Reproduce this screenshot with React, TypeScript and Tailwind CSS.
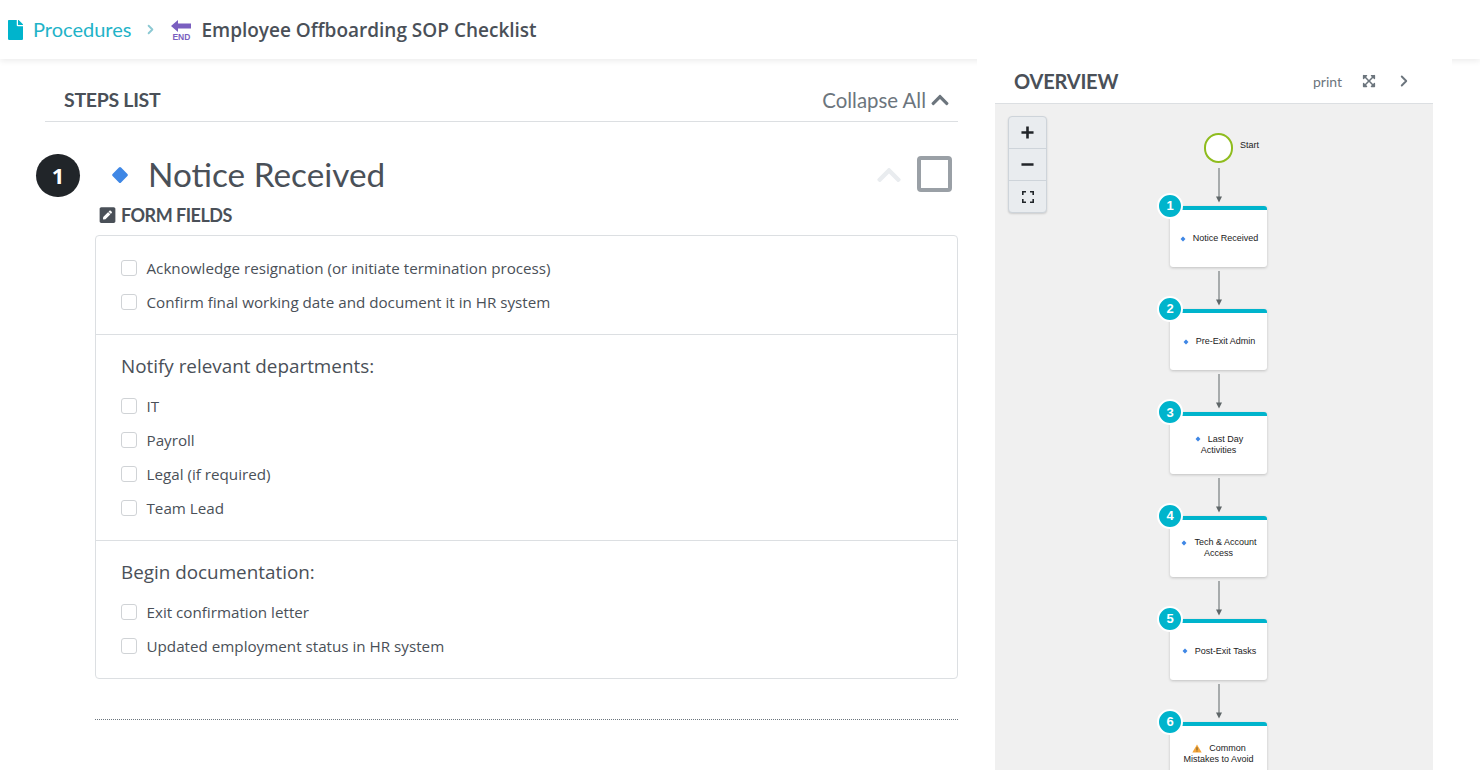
import { FaChevronUp, FaExpandArrowsAlt, FaFile, FaPenSquare } from "react-icons/fa";
import { ChevronRight } from "lucide-react";

const flowNodes = [
  { num: 1, lines: ["Notice Received"] },
  { num: 2, lines: ["Pre-Exit Admin"] },
  { num: 3, lines: ["Last Day", "Activities"] },
  { num: 4, lines: ["Tech & Account", "Access"] },
  { num: 5, lines: ["Post-Exit Tasks"] },
  { num: 6, lines: ["Common", "Mistakes to Avoid"], warn: true },
];

function Diamond({ className }: { className: string }) {
  return (
    <svg viewBox="0 0 20 20" className={className} aria-hidden="true">
      <rect x="4" y="4" width="12" height="12" rx="1.5" transform="rotate(45 10 10)" fill="#3f87e5" />
    </svg>
  );
}

function Arrow() {
  return (
    <svg width="8" height="35" viewBox="0 0 8 35" className="shrink-0" aria-hidden="true">
      <path d="M4 0V29" stroke="#5f6668" strokeWidth="1" />
      <path d="M1 28.5H7L4 34.5Z" fill="#5f6668" />
    </svg>
  );
}

function FlowNode({ num, lines, warn }: { num: number; lines: string[]; warn?: boolean }) {
  return (
    <div className="relative h-[61.2px] w-[97px] shrink-0 rounded-[3px] border-t-[4px] border-[#00b4cc] bg-white shadow-[0_1px_3px_rgba(0,0,0,0.2)]">
      <span className="absolute -left-[13px] -top-[17px] flex h-[26px] w-[26px] items-center justify-center rounded-full border-2 border-white bg-[#00b4cc] font-['Liberation_Sans',sans-serif] text-[13px] font-bold text-white">
        {num}
      </span>
      <div className="flex h-[57px] flex-col items-center justify-center text-center font-['Liberation_Sans',sans-serif] text-[9px] leading-[11px] text-[#222]">
        <span className="flex items-center gap-[7px] pl-[1px]">
          {warn ? (
            <svg viewBox="0 0 16 14" className="h-[9px] w-[10px]" aria-hidden="true">
              <path d="M8 0.5L15.5 13.5H0.5Z" fill="#f4a63a" />
              <path d="M7.3 5h1.4v4.6H7.3zM7.3 10.4h1.4v1.4H7.3z" fill="#5a4a2a" />
            </svg>
          ) : (
            <Diamond className="h-[6px] w-[6px]" />
          )}
          {lines[0]}
        </span>
        {lines[1] ? <span>{lines[1]}</span> : null}
      </div>
    </div>
  );
}

function CheckRow({ label }: { label: string }) {
  return (
    <label className="flex h-[34px] items-center gap-[9.5px]">
      <span className="h-[16px] w-[16px] shrink-0 rounded-[3px] border border-[#d0d3d6] bg-white" />
      <span className="text-[15.2px] text-[#4a5058]">{label}</span>
    </label>
  );
}

export default function App() {
  return (
    <div className="h-[770px] w-[1480px] overflow-hidden bg-white font-['Open_Sans',sans-serif]">
      <header className="flex h-[59px] items-center bg-white pl-[8px] shadow-[0_2px_6px_rgba(0,0,0,0.08)]">
        <FaFile className="h-[20px] w-[15px] text-[#00b4cc]" />
        <span className="ml-[10px] -translate-y-[1px] font-['Lato',sans-serif] text-[20px] text-[#1fb3c8]">Procedures</span>
        <ChevronRight className="ml-[12px] h-[15px] w-[15px] text-[#8cc9d3]" strokeWidth={3} />
        <span className="ml-[13px] flex w-[20px] translate-y-[1px] flex-col items-center">
          <svg viewBox="0 0 20 12" className="h-[12px] w-[20px]" aria-hidden="true">
            <path d="M0 6L7 0V3.5H20V8.5H7V12Z" fill="#7a5fc0" />
          </svg>
          <span className="font-['Liberation_Sans',sans-serif] text-[8.5px] font-bold leading-[10px] text-[#7a5fc0]">END</span>
        </span>
        <h1 className="ml-[10px] translate-y-[1px] text-[19px] font-semibold text-[#4a5058]">Employee Offboarding SOP Checklist</h1>
      </header>

      <div className="flex">
        <main className="w-[977px] shrink-0 pt-[17px]">
          <div className="ml-[45px] mr-[19px] flex h-[46px] items-center justify-between border-b border-[#dcdfe2] pl-[19px] pr-[9px] font-['Lato',sans-serif]">
            <h2 className="translate-y-[1px] text-[19.5px] font-bold tracking-[-0.3px] text-[#4a5058]">STEPS LIST</h2>
            <button type="button" className="flex translate-y-[2px] items-center gap-[5px] text-[20.4px] text-[#6c757d]">
              Collapse All
              <FaChevronUp className="h-[20px] w-[18px] text-[#6c757d]" />
            </button>
          </div>

          <div className="ml-[36px] mr-[19px] flex items-start pt-[32px]">
            <span className="flex h-[43px] w-[44px] shrink-0 items-center justify-center rounded-full bg-[#212529] text-[22px] font-bold text-white">
              1
            </span>
            <div className="ml-[15px] flex-1">
              <div className="flex h-[42px] items-center">
                <Diamond className="ml-[15px] h-[20px] w-[20px]" />
                <h3 className="ml-[18px] flex-1 font-['Lato',sans-serif] text-[33.3px] text-[#4a5058]">Notice Received</h3>
                <FaChevronUp className="mr-[16px] h-[28px] w-[24px] text-[#e9ecef]" />
                <span className="mr-[6px] h-[36px] w-[35px] -translate-y-[1px] rounded-[4px] border-[4px] border-[#9aa0a6]" />
              </div>
              <div className="mt-[8px] flex h-[22px] items-center pl-[4px] font-['Lato',sans-serif]">
                <FaPenSquare className="h-[18px] w-[17px] text-[#4a5058]" />
                <span className="ml-[5px] text-[18px] font-bold tracking-[-0.5px] text-[#4a5058]">FORM FIELDS</span>
              </div>
              <div className="mt-[9px] rounded-[4px] border border-[#dcdfe2]">
                <section className="h-[99px] border-b border-[#dcdfe2] px-[25px] pt-[15px]">
                  <CheckRow label="Acknowledge resignation (or initiate termination process)" />
                  <CheckRow label="Confirm final working date and document it in HR system" />
                </section>
                <section className="h-[206px] border-b border-[#dcdfe2] px-[25px] pt-[16px]">
                  <h4 className="mb-[8px] text-[18.85px] leading-[30px] text-[#4a5058]">Notify relevant departments:</h4>
                  <CheckRow label="IT" />
                  <CheckRow label="Payroll" />
                  <CheckRow label="Legal (if required)" />
                  <CheckRow label="Team Lead" />
                </section>
                <section className="h-[137px] px-[25px] pt-[16px]">
                  <h4 className="mb-[8px] text-[18.85px] leading-[30px] text-[#4a5058]">Begin documentation:</h4>
                  <CheckRow label="Exit confirmation letter" />
                  <CheckRow label="Updated employment status in HR system" />
                </section>
              </div>
              <div className="mt-[40px] border-t border-dotted border-[#6c757d]" />
            </div>
          </div>
        </main>

        <aside className="relative z-10 h-[711px] w-[475px] shrink-0 bg-white pl-[18px] pr-[19px]">
          <div className="flex h-[45px] items-center border-b border-[#dcdfe2] pl-[19px] pr-[20px] font-['Lato',sans-serif]">
            <h2 className="flex-1 text-[20px] font-bold tracking-[-0.2px] text-[#4a5058]">OVERVIEW</h2>
            <span className="text-[14px] text-[#6c757d]">print</span>
            <FaExpandArrowsAlt className="ml-[20px] h-[14px] w-[14px] text-[#6c757d]" />
            <ChevronRight className="ml-[19px] h-[18px] w-[18px] text-[#6c757d]" strokeWidth={2.5} />
          </div>
          <div className="relative flex h-[666px] flex-col items-center overflow-hidden bg-[#f0f0f0] pl-[9px] pt-[29px]">
            <div className="absolute left-[13px] top-[12px] w-[39px] overflow-hidden rounded-[4px] border border-[#ced4da] bg-[#e9ecef] shadow-[0_1px_2px_rgba(0,0,0,0.15)]">
              <div className="flex h-[32px] items-center justify-center border-b border-[#ced4da] text-[#212529]">
                <svg viewBox="0 0 14 14" className="h-[13px] w-[13px]" aria-hidden="true">
                  <path d="M7 0.5V13.5M0.5 7H13.5" stroke="currentColor" strokeWidth="2.8" />
                </svg>
              </div>
              <div className="flex h-[32px] items-center justify-center border-b border-[#ced4da] text-[#212529]">
                <svg viewBox="0 0 14 14" className="h-[13px] w-[13px]" aria-hidden="true">
                  <path d="M0.5 7H13.5" stroke="currentColor" strokeWidth="2.8" />
                </svg>
              </div>
              <div className="flex h-[31px] items-center justify-center text-[#212529]">
                <svg viewBox="0 0 12 12" className="h-[12px] w-[12px]" aria-hidden="true">
                  <path d="M0.8 4V0.8H4M8 0.8H11.2V4M11.2 8V11.2H8M4 11.2H0.8V8" fill="none" stroke="currentColor" strokeWidth="1.6" />
                </svg>
              </div>
            </div>

            <div className="relative h-[30px] w-[29px] shrink-0 rounded-full border-2 border-[#8fbc1e] bg-white">
              <span className="absolute left-[34px] top-[5px] font-['Liberation_Sans',sans-serif] text-[9px] leading-[11px] text-[#222]">
                Start
              </span>
            </div>
            <div className="mt-[5px]">
              <Arrow />
            </div>
            {flowNodes.map((node) => (
              <div key={node.num} className="flex shrink-0 flex-col items-center">
                <div className="mt-[3px]">
                  <FlowNode num={node.num} lines={node.lines} warn={node.warn} />
                </div>
                <div className="mt-[4px]">
                  <Arrow />
                </div>
              </div>
            ))}
          </div>
        </aside>
      </div>
    </div>
  );
}
